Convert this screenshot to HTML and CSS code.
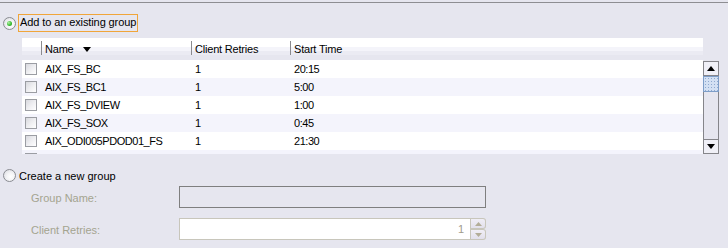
FILE: index.html
```html
<!DOCTYPE html>
<html>
<head>
<meta charset="utf-8">
<link rel="stylesheet" href="styles.css">
</head>
<body>
<div class="page">
  <div class="rule"></div>

  <div class="choice choice-first">
    <span class="radio"><span class="dot"></span></span>
    <span class="focus-label">Add to an existing group</span>
  </div>

  <div class="table">
    <div class="thead">
      <div class="th th-check"></div>
      <div class="th th-sep">Name<span class="sort"></span></div>
      <div class="th th-sep">Client Retries</div>
      <div class="th th-sep">Start Time</div>
    </div>
    <div class="tbody-wrap">
      <div class="tbody">
        <div class="tr"><div class="td td-check"><span class="cb"></span></div><div class="td">AIX_FS_BC</div><div class="td">1</div><div class="td">20:15</div></div>
        <div class="tr alt"><div class="td td-check"><span class="cb"></span></div><div class="td">AIX_FS_BC1</div><div class="td">1</div><div class="td">5:00</div></div>
        <div class="tr"><div class="td td-check"><span class="cb"></span></div><div class="td">AIX_FS_DVIEW</div><div class="td">1</div><div class="td">1:00</div></div>
        <div class="tr alt"><div class="td td-check"><span class="cb"></span></div><div class="td">AIX_FS_SOX</div><div class="td">1</div><div class="td">0:45</div></div>
        <div class="tr"><div class="td td-check"><span class="cb"></span></div><div class="td">AIX_ODI005PDOD01_FS</div><div class="td">1</div><div class="td">21:30</div></div>
        <div class="tr alt"><div class="td td-check"><span class="cb"></span></div><div class="td"></div><div class="td"></div><div class="td"></div></div>
      </div>
      <div class="scrollbar">
        <div class="sb-btn"><svg width="8" height="5" viewBox="0 0 8 5"><polygon points="0,5 8,5 4,0" fill="#000"/></svg></div>
        <div class="sb-thumb"></div>
        <div class="sb-track"></div>
        <div class="sb-btn"><svg width="8" height="5" viewBox="0 0 8 5"><polygon points="0,0 8,0 4,5" fill="#000"/></svg></div>
      </div>
    </div>
  </div>

  <div class="choice choice-second">
    <span class="radio radio-off"></span>
    <span class="plain-label">Create a new group</span>
  </div>

  <div class="form">
    <div class="flabel">Group Name:</div>
    <div class="field-disabled"></div>
    <div class="flabel">Client Retries:</div>
    <div class="spinner">
      <div class="spin-text">1</div>
      <div class="spin-btns">
        <div class="spin-btn"><svg width="7" height="4" viewBox="0 0 7 4"><polygon points="0,4 7,4 3.5,0" fill="#b3ad98"/></svg></div>
        <div class="spin-btn"><svg width="7" height="4" viewBox="0 0 7 4"><polygon points="0,0 7,0 3.5,4" fill="#b3ad98"/></svg></div>
      </div>
    </div>
  </div>
</div>
</body>
</html>
```

FILE: styles.css
```css
html, body {
  margin: 0;
  padding: 0;
}
body {
  background: #e6e6ef;
  font-family: "Liberation Sans", Arial, sans-serif;
  font-size: 11px;
  color: #000;
  width: 728px;
  height: 248px;
  overflow: hidden;
}
.page {
  width: 728px;
  height: 248px;
}
.rule {
  margin-top: 2px;
  border-top: 1px solid #8e8e92;
}

.choice {
  display: flex;
  align-items: center;
  padding-left: 3px;
}
.choice-first {
  margin-top: 11px;
  height: 18px;
}
.radio {
  box-sizing: border-box;
  width: 13px;
  height: 13px;
  border-radius: 50%;
  border: 1px solid #8a8c92;
  background: radial-gradient(circle at 60% 60%, #ffffff 0, #f4f4f6 40%, #d6d7de 100%);
  display: flex;
  align-items: center;
  justify-content: center;
  flex: none;
}
.dot {
  width: 5px;
  height: 5px;
  border-radius: 50%;
  background: radial-gradient(circle at 35% 35%, #b6f0a8 0, #3cbf36 55%, #1f8a1c 100%);
}
.focus-label {
  margin-left: 2px;
  box-sizing: border-box;
  height: 18px;
  line-height: 15px;
  padding: 0 1px;
  border: 1px solid #f0a53a;
  letter-spacing: -0.1px;
}

.table {
  margin: 6px 0 0 22px;
  width: 697px;
}
.thead {
  width: 681px;
  height: 17px;
  display: grid;
  grid-template-columns: 19px 150px 99px 413px;
  background: linear-gradient(to bottom, #ffffff 0, #ffffff 51%, #f4f4fa 51%, #f4f4fa 76%, #ebebf3 76%, #ebebf3 100%);
}
.th {
  margin-top: 3px;
  height: 14px;
  box-sizing: border-box;
  padding: 2px 0 0 3px;
  line-height: 13px;
  display: flex;
  align-items: flex-start;
  white-space: nowrap;
  letter-spacing: -0.2px;
}
.th-sep {
  border-left: 1px solid #8a8a8e;
}
.sort {
  width: 0;
  height: 0;
  margin: 4px 0 0 9px;
  border-left: 4.5px solid transparent;
  border-right: 4.5px solid transparent;
  border-top: 5px solid #000;
}

.tbody-wrap {
  margin-top: 5px;
  display: flex;
  height: 94px;
}
.tbody {
  width: 681px;
  height: 94px;
  overflow: hidden;
}
.tr {
  display: grid;
  grid-template-columns: 19px 150px 99px 413px;
  height: 18px;
  background: #ffffff;
}
.tr.alt {
  background: #f4f4fc;
}
.td {
  line-height: 18px;
  padding-left: 4px;
  white-space: nowrap;
  letter-spacing: -0.45px;
}
.td-check {
  padding-left: 3px;
}
.cb {
  display: block;
  box-sizing: border-box;
  width: 12px;
  height: 12px;
  margin-top: 3px;
  border: 1px solid #9b9da3;
  background: linear-gradient(135deg, #d8d9de 0, #eeeef1 50%, #ffffff 100%);
}

.scrollbar {
  width: 16px;
  height: 93px;
  margin-top: 1px;
  display: flex;
  flex-direction: column;
  box-sizing: border-box;
}
.sb-btn {
  box-sizing: border-box;
  height: 15px;
  border: 1px solid #85858a;
  background: #f0f0f7;
  display: flex;
  align-items: center;
  justify-content: center;
  flex: none;
}
.sb-thumb {
  box-sizing: border-box;
  height: 16px;
  border: 1px solid #7e9ec8;
  background-color: #d3e0f3;
  background-image: radial-gradient(circle, #8fa9d0 0.7px, transparent 0.8px);
  background-size: 3px 3px;
  flex: none;
}
.sb-track {
  flex: 1;
  box-sizing: border-box;
  border-left: 1px solid #85858a;
  border-right: 1px solid #85858a;
  background: #e6e6ef;
}

.choice-second {
  margin-top: 15px;
  height: 13px;
}
.plain-label {
  margin-left: 3px;
  line-height: 13px;
  padding-top: 2px;
}

.form {
  margin-top: 4px;
  padding-left: 31px;
  display: grid;
  grid-template-columns: 148px 307px;
  grid-auto-rows: 22px;
  row-gap: 10px;
}
.flabel {
  color: #a4a48f;
  line-height: 22px;
  padding-top: 1px;
}
.field-disabled {
  box-sizing: border-box;
  border: 1px solid #7f7f7f;
  background: #e6e6ef;
}
.spinner {
  display: flex;
  height: 22px;
}
.spin-text {
  box-sizing: border-box;
  flex: 1;
  border: 1px solid #c8c6bb;
  background: #ffffff;
  text-align: right;
  padding-right: 6px;
  line-height: 20px;
  color: #a09c8c;
}
.spin-btns {
  width: 15px;
  display: flex;
  flex-direction: column;
}
.spin-btn {
  box-sizing: border-box;
  flex: 1;
  border: 1px solid #c8c6bb;
  border-left: none;
  border-radius: 0 3px 3px 0;
  background: linear-gradient(to bottom, #f0eef6, #e2e0ec);
  display: flex;
  align-items: center;
  justify-content: center;
}
```
